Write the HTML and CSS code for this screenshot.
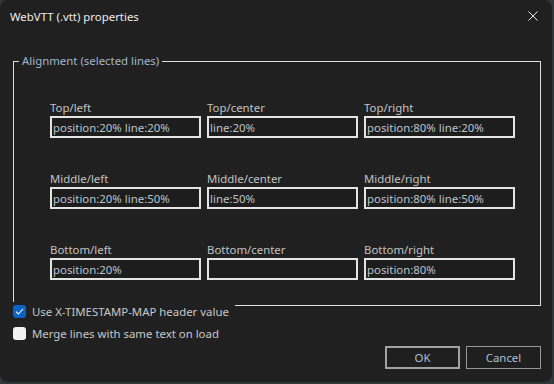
FILE: index.html
```html
<!DOCTYPE html>
<html lang="en">
<head>
  <meta charset="UTF-8"/>
  <title>WebVTT (.vtt) properties</title>
  <link rel="stylesheet" href="styles.css">
</head>
<body>
  <div class="window">
    <div class="titlebar">
      <span class="title">WebVTT (.vtt) properties</span>
      <button class="close" title="Close">
        <svg width="10" height="10" viewBox="0 0 10 10"><path d="M0.5 0.5 L9.5 9.5 M9.5 0.5 L0.5 9.5" stroke="#e6e6e6" stroke-width="1"/></svg>
      </button>
    </div>

    <div class="content">
      <fieldset class="group">
        <legend>Alignment (selected lines)</legend>
        <div class="grid">
          <div class="field"><label>Top/left</label><input type="text" value="position:20% line:20%"></div>
          <div class="field"><label>Top/center</label><input type="text" value="line:20%"></div>
          <div class="field"><label>Top/right</label><input type="text" value="position:80% line:20%"></div>
          <div class="field"><label>Middle/left</label><input type="text" value="position:20% line:50%"></div>
          <div class="field"><label>Middle/center</label><input type="text" value="line:50%"></div>
          <div class="field"><label>Middle/right</label><input type="text" value="position:80% line:50%"></div>
          <div class="field"><label>Bottom/left</label><input type="text" value="position:20%"></div>
          <div class="field"><label>Bottom/center</label><input type="text" value=""></div>
          <div class="field"><label>Bottom/right</label><input type="text" value="position:80%"></div>
        </div>
      </fieldset>

      <label class="check first">
        <span class="box on">
          <svg width="9" height="7" viewBox="0 0 9 7"><path d="M1 3.6 L3.4 6 L8 1" fill="none" stroke="#fff" stroke-width="1.1"/></svg>
        </span>
        Use X-TIMESTAMP-MAP header value
      </label>
      <label class="check">
        <span class="box"></span>
        Merge lines with same text on load
      </label>

      <div class="buttons">
        <button class="btn default">OK</button>
        <button class="btn">Cancel</button>
      </div>
    </div>
  </div>
</body>
</html>
```
FILE: styles.css
```css
* { box-sizing: border-box; margin: 0; padding: 0; }

html, body {
  width: 554px;
  height: 384px;
  overflow: hidden;
}

body {
  background: #2e3739;
  font-family: "Noto Sans", "Lato", sans-serif;
  font-size: 11.4px;
  color: #c4c4c4;
}

.window {
  width: 552px;
  height: 382px;
  background: #202020;
  border-radius: 8px;
  display: flex;
  flex-direction: column;
}

.titlebar {
  height: 32px;
  display: flex;
  align-items: center;
  justify-content: space-between;
  padding-left: 10px;
}

.title {
  color: #ededed;
}

.close {
  width: 46px;
  height: 32px;
  background: none;
  border: none;
  display: flex;
  align-items: center;
  justify-content: center;
  margin-right: -4px;
}

.content {
  padding: 21px 11px 0 13px;
  display: flex;
  flex-direction: column;
}

.group {
  width: 528px;
  border: 1px solid #dedede;
  padding: 0 0 25px 0;
}

.group legend {
  margin-left: 5px;
  padding: 0 3px;
  line-height: 16px;
  color: #a2b6cb;
}

.grid {
  display: grid;
  grid-template-columns: repeat(3, 151px);
  column-gap: 6px;
  row-gap: 32px;
  padding: 30px 0 0 36px;
}

.field label {
  display: block;
  line-height: 17px;
  color: #c2c2c2;
}

.field input {
  display: block;
  width: 151px;
  height: 22px;
  border: 2px solid #e4e4e4;
  background: #1d1d1d;
  color: #bcc4cb;
  font: inherit;
  padding: 0 1px;
  outline: none;
}

.check {
  display: flex;
  align-items: center;
  gap: 6px;
  height: 18px;
  width: fit-content;
  padding-right: 6px;
  background: #202020;
  color: #c8c8c8;
  margin-top: 4px;
}

.check.first {
  margin-top: -4px;
  position: relative;
}

.box {
  width: 13px;
  height: 13px;
  border-radius: 3px;
  background: #f2f2f2;
  display: flex;
  align-items: center;
  justify-content: center;
}

.box.on { background: #0a62c4; }

.buttons {
  display: flex;
  justify-content: flex-end;
  gap: 6px;
  margin-top: 4px;
}

.btn {
  width: 75px;
  height: 23px;
  background: #1f1f1f;
  border: 1px solid #979797;
  color: #a9c0d6;
  font: inherit;
}

.btn.default { border: 2px solid #a2a2a2; }
```
